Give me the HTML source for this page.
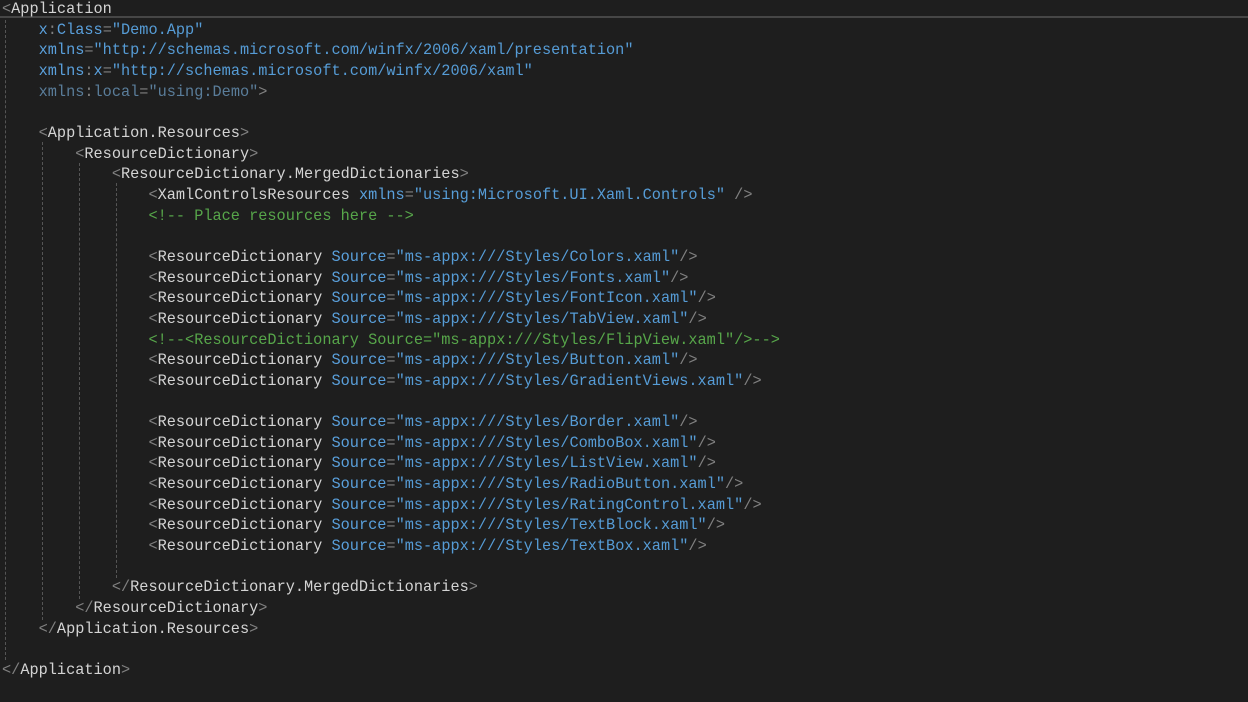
<!DOCTYPE html>
<html><head><style>
body{margin:0;background:#1e1e1e;width:1248px;height:702px;overflow:hidden;position:relative}
pre{margin:0;position:absolute;left:2px;top:-1px;font-family:"Liberation Mono",monospace;font-size:15.25px;line-height:20.66px;color:#d4d4d4}
.b{color:#808080}.a{color:#5aa0dc}.v{color:#569cd6}.c{color:#57a64a}.d{color:#5a7d9a}
.g{position:absolute;border-left:1px dashed #555;width:0}
.hl{position:absolute;left:0;top:0;width:1248px;height:16px;border-bottom:2px solid #464646}
</style></head><body>
<div class="hl"></div>
<div class="g" style="left:5px;top:20px;height:640px"></div>
<div class="g" style="left:42px;top:142px;height:478px"></div>
<div class="g" style="left:79px;top:163px;height:436px"></div>
<div class="g" style="left:116px;top:183px;height:395px"></div>
<pre><span class="b">&lt;</span>Application
    <span class="a">x</span><span class="b">:</span><span class="a">Class</span><span class="b">=</span><span class="v">"Demo.App"</span>
    <span class="a">xmlns</span><span class="b">=</span><span class="v">"http://schemas.microsoft.com/winfx/2006/xaml/presentation"</span>
    <span class="a">xmlns</span><span class="b">:</span><span class="a">x</span><span class="b">=</span><span class="v">"http://schemas.microsoft.com/winfx/2006/xaml"</span>
    <span class="d">xmlns</span><span class="b">:</span><span class="d">local</span><span class="b">=</span><span class="d">"using:Demo"</span><span class="b">&gt;</span>

    <span class="b">&lt;</span>Application.Resources<span class="b">&gt;</span>
        <span class="b">&lt;</span>ResourceDictionary<span class="b">&gt;</span>
            <span class="b">&lt;</span>ResourceDictionary.MergedDictionaries<span class="b">&gt;</span>
                <span class="b">&lt;</span>XamlControlsResources <span class="a">xmlns</span><span class="b">=</span><span class="v">"using:Microsoft.UI.Xaml.Controls"</span> <span class="b">/&gt;</span>
                <span class="c">&lt;!-- Place resources here --&gt;</span>

                <span class="b">&lt;</span>ResourceDictionary <span class="a">Source</span><span class="b">=</span><span class="v">"ms-appx:///Styles/Colors.xaml"</span><span class="b">/&gt;</span>
                <span class="b">&lt;</span>ResourceDictionary <span class="a">Source</span><span class="b">=</span><span class="v">"ms-appx:///Styles/Fonts.xaml"</span><span class="b">/&gt;</span>
                <span class="b">&lt;</span>ResourceDictionary <span class="a">Source</span><span class="b">=</span><span class="v">"ms-appx:///Styles/FontIcon.xaml"</span><span class="b">/&gt;</span>
                <span class="b">&lt;</span>ResourceDictionary <span class="a">Source</span><span class="b">=</span><span class="v">"ms-appx:///Styles/TabView.xaml"</span><span class="b">/&gt;</span>
                <span class="c">&lt;!--&lt;ResourceDictionary Source="ms-appx:///Styles/FlipView.xaml"/&gt;--&gt;</span>
                <span class="b">&lt;</span>ResourceDictionary <span class="a">Source</span><span class="b">=</span><span class="v">"ms-appx:///Styles/Button.xaml"</span><span class="b">/&gt;</span>
                <span class="b">&lt;</span>ResourceDictionary <span class="a">Source</span><span class="b">=</span><span class="v">"ms-appx:///Styles/GradientViews.xaml"</span><span class="b">/&gt;</span>

                <span class="b">&lt;</span>ResourceDictionary <span class="a">Source</span><span class="b">=</span><span class="v">"ms-appx:///Styles/Border.xaml"</span><span class="b">/&gt;</span>
                <span class="b">&lt;</span>ResourceDictionary <span class="a">Source</span><span class="b">=</span><span class="v">"ms-appx:///Styles/ComboBox.xaml"</span><span class="b">/&gt;</span>
                <span class="b">&lt;</span>ResourceDictionary <span class="a">Source</span><span class="b">=</span><span class="v">"ms-appx:///Styles/ListView.xaml"</span><span class="b">/&gt;</span>
                <span class="b">&lt;</span>ResourceDictionary <span class="a">Source</span><span class="b">=</span><span class="v">"ms-appx:///Styles/RadioButton.xaml"</span><span class="b">/&gt;</span>
                <span class="b">&lt;</span>ResourceDictionary <span class="a">Source</span><span class="b">=</span><span class="v">"ms-appx:///Styles/RatingControl.xaml"</span><span class="b">/&gt;</span>
                <span class="b">&lt;</span>ResourceDictionary <span class="a">Source</span><span class="b">=</span><span class="v">"ms-appx:///Styles/TextBlock.xaml"</span><span class="b">/&gt;</span>
                <span class="b">&lt;</span>ResourceDictionary <span class="a">Source</span><span class="b">=</span><span class="v">"ms-appx:///Styles/TextBox.xaml"</span><span class="b">/&gt;</span>

            <span class="b">&lt;/</span>ResourceDictionary.MergedDictionaries<span class="b">&gt;</span>
        <span class="b">&lt;/</span>ResourceDictionary<span class="b">&gt;</span>
    <span class="b">&lt;/</span>Application.Resources<span class="b">&gt;</span>

<span class="b">&lt;/</span>Application<span class="b">&gt;</span>
</pre>
</body></html>
